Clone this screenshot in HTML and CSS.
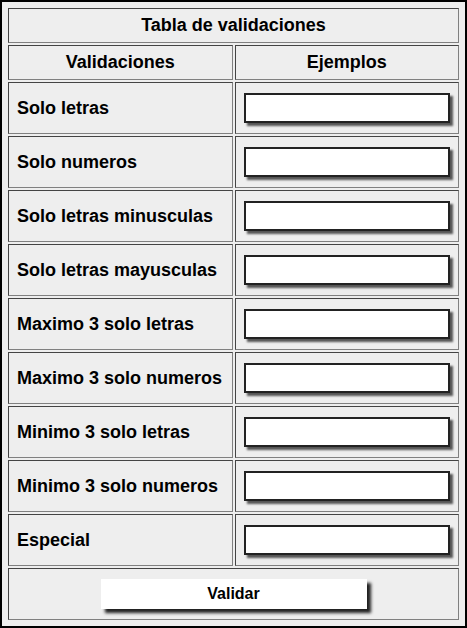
FILE: index.html
```html
<!DOCTYPE html>
<html lang="es">
<head>
<meta charset="utf-8">
<title>Tabla de validaciones</title>
<link rel="stylesheet" href="styles.css">
</head>
<body>
<div class="frame">
<table class="tabla">
  <tr><td class="titulo" colspan="2">Tabla de validaciones</td></tr>
  <tr><td class="cab">Validaciones</td><td class="cab">Ejemplos</td></tr>
  <tr><td class="lbl">Solo letras</td><td class="inp"><input type="text"></td></tr>
  <tr><td class="lbl">Solo numeros</td><td class="inp"><input type="text"></td></tr>
  <tr><td class="lbl">Solo letras minusculas</td><td class="inp"><input type="text"></td></tr>
  <tr><td class="lbl">Solo letras mayusculas</td><td class="inp"><input type="text"></td></tr>
  <tr><td class="lbl">Maximo 3 solo letras</td><td class="inp"><input type="text"></td></tr>
  <tr><td class="lbl">Maximo 3 solo numeros</td><td class="inp"><input type="text"></td></tr>
  <tr><td class="lbl">Minimo 3 solo letras</td><td class="inp"><input type="text"></td></tr>
  <tr><td class="lbl">Minimo 3 solo numeros</td><td class="inp"><input type="text"></td></tr>
  <tr><td class="lbl">Especial</td><td class="inp"><input type="text"></td></tr>
  <tr><td class="pie" colspan="2"><button type="button">Validar</button></td></tr>
</table>
</div>
</body>
</html>
```
FILE: styles.css
```css
html, body {
  margin: 0;
  padding: 0;
  background: #eeeeee;
}
body {
  font-family: "Liberation Sans", Arial, sans-serif;
  font-size: 18px;
  font-weight: bold;
  color: #000;
}
.frame {
  box-sizing: border-box;
  width: 467px;
  height: 628px;
  border: 2px solid #000;
  padding: 4px;
  background: #eeeeee;
}
.tabla {
  width: 100%;
  border-collapse: separate;
  border-spacing: 2px;
  table-layout: fixed;
}
.tabla td {
  box-sizing: border-box;
  border: 1px solid #808080;
  border-top-color: #444;
  border-left-color: #444;
  padding: 0 8px 1px;
  vertical-align: middle;
  line-height: 20px;
}
.titulo {
  height: 35px;
  text-align: center;
}
.cab {
  height: 35px;
  text-align: center;
}
.lbl, .inp {
  height: 52px;
}
.lbl {
  text-align: left;
}
.inp input {
  box-sizing: border-box;
  display: block;
  width: 100%;
  height: 30px;
  margin: 0;
  border: 2px solid #222;
  background: #fff;
  box-shadow: 3px 3px 2px #555;
  outline: none;
}
.pie {
  height: 52px;
  text-align: center;
}
.pie button {
  width: 266px;
  height: 30px;
  border: none;
  background: #fff;
  font-family: "Liberation Sans", Arial, sans-serif;
  font-size: 16px;
  font-weight: bold;
  color: #000;
  box-shadow: 4px 4px 3px #222;
  margin-top: 0;
}
```
